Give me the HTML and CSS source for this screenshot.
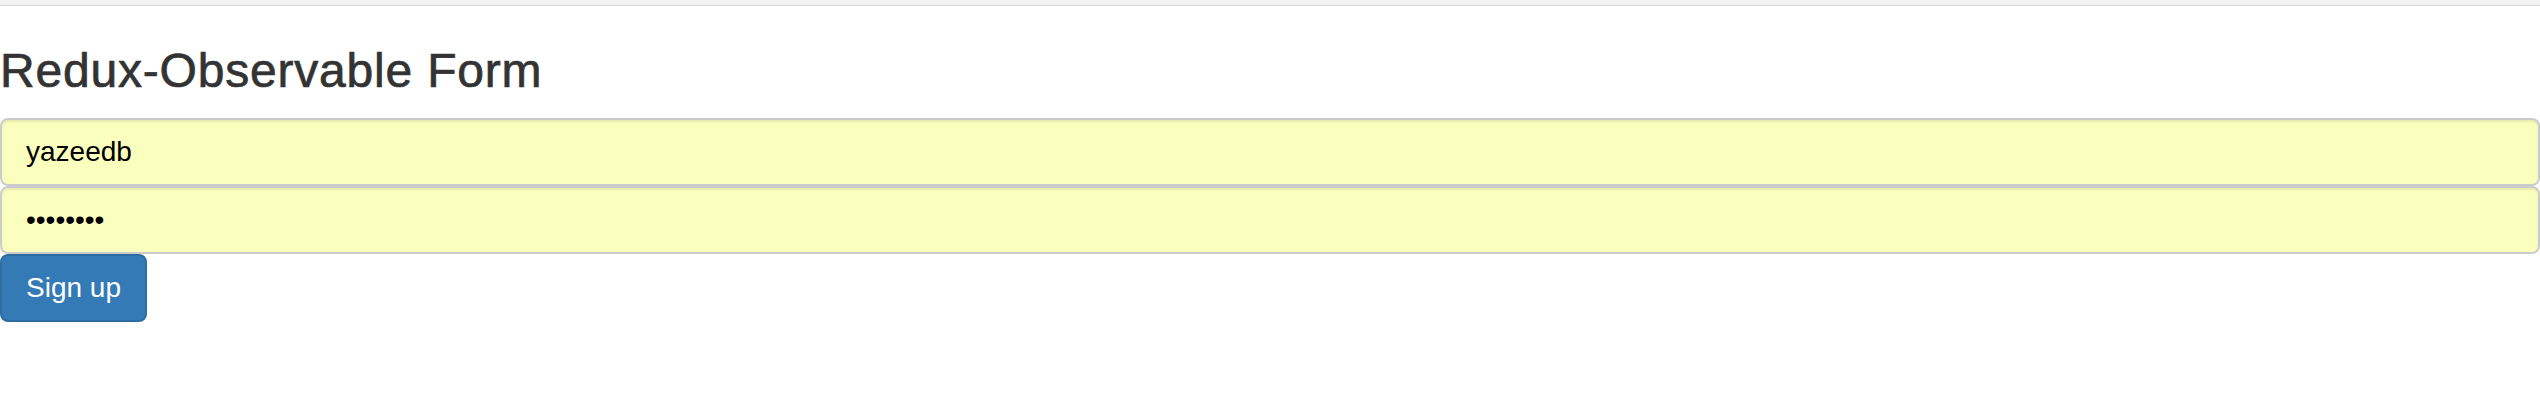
FILE: index.html
```html
<!DOCTYPE html>
<html>
<head>
<meta charset="utf-8">
<link rel="stylesheet" href="styles.css">
</head>
<body>
<div class="topbar"></div>
<main class="app">
  <h3 class="title">Redux-Observable Form</h3>
  <form class="form">
    <input class="field" type="text" value="yazeedb">
    <input class="field" type="password" value="password">
    <button class="btn" type="button">Sign up</button>
  </form>
</main>
</body>
</html>
```
FILE: styles.css
```css
html, body {
  margin: 0;
  padding: 0;
  background: #fff;
}
body {
  font-family: "Liberation Sans", Arial, Helvetica, sans-serif;
  color: #333;
}
.topbar {
  height: 5px;
  background: #f2f2f2;
  border-bottom: 1px solid #d6d6d6;
}
.app {
  display: block;
}
.title {
  margin: 39px 0 20px 0;
  font-size: 48px;
  font-weight: 400;
  letter-spacing: 0.8px;
  -webkit-text-stroke: 0.7px #333;
  line-height: 1.1;
  color: #333;
}
.form {
  display: flex;
  flex-direction: column;
  align-items: flex-start;
  margin: 0;
}
.field {
  display: block;
  box-sizing: border-box;
  width: 100%;
  height: 68px;
  margin: 0;
  padding: 12px 24px;
  font-family: "Liberation Sans", Arial, Helvetica, sans-serif;
  font-size: 28px;
  color: #000;
  background: #faffbd;
  border: 2px solid #ccc;
  border-radius: 8px;
  box-shadow: inset 0 2px 2px rgba(0,0,0,.075);
  outline: none;
}
.btn {
  box-sizing: border-box;
  height: 68px;
  margin: 0;
  padding: 12px 24px;
  font-family: "Liberation Sans", Arial, Helvetica, sans-serif;
  font-size: 28px;
  line-height: 40px;
  color: #fff;
  background: #337ab7;
  border: 2px solid #2e6da4;
  border-radius: 8px;
  cursor: pointer;
}
```
